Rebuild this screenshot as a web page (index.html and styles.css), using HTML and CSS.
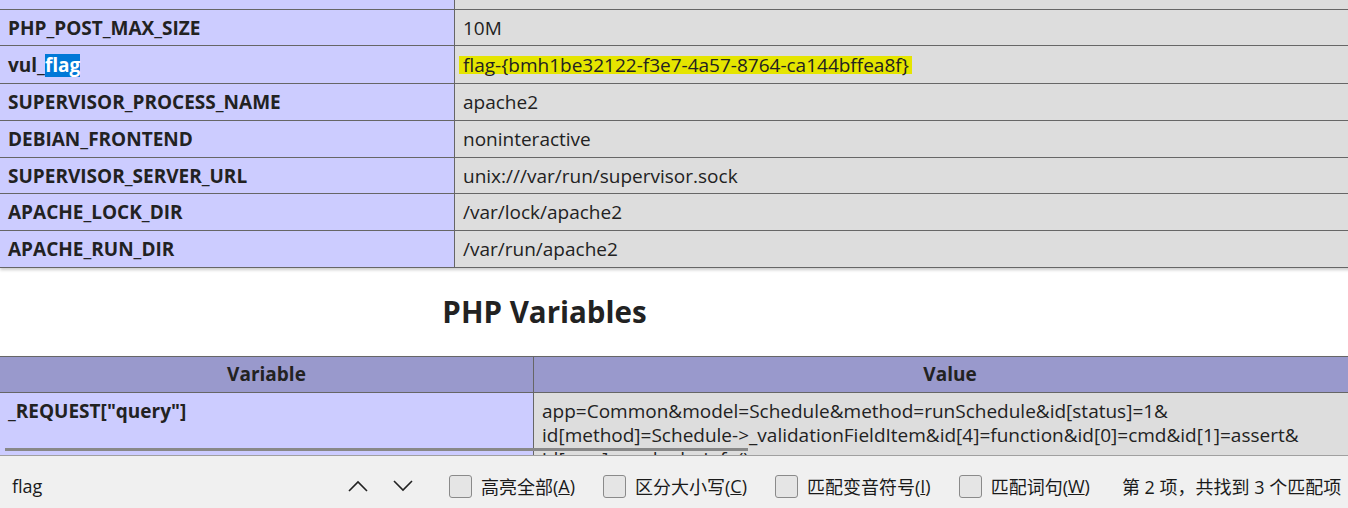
FILE: index.html
```html
<!DOCTYPE html>
<html lang="zh-CN">
<head>
  <meta charset="UTF-8">
  <title>phpinfo()</title>
  <link rel="stylesheet" href="styles.css">
</head>
<body>
  <div class="page">
    <table class="info env">
      <tr><td class="e">&nbsp;</td><td class="v">&nbsp;</td></tr>
      <tr><td class="e">PHP_POST_MAX_SIZE</td><td class="v">10M</td></tr>
      <tr><td class="e">vul_<span class="sel">flag</span></td><td class="v"><span class="hit">flag-{bmh1be32122-f3e7-4a57-8764-ca144bffea8f}</span></td></tr>
      <tr><td class="e">SUPERVISOR_PROCESS_NAME</td><td class="v">apache2</td></tr>
      <tr><td class="e">DEBIAN_FRONTEND</td><td class="v">noninteractive</td></tr>
      <tr><td class="e">SUPERVISOR_SERVER_URL</td><td class="v">unix:///var/run/supervisor.sock</td></tr>
      <tr><td class="e">APACHE_LOCK_DIR</td><td class="v">/var/lock/apache2</td></tr>
      <tr><td class="e">APACHE_RUN_DIR</td><td class="v">/var/run/apache2</td></tr>
    </table>

    <h2>PHP Variables</h2>

    <table class="info vars">
      <tr class="h"><th>Variable</th><th>Value</th></tr>
      <tr>
        <td class="e">_REQUEST["query"]</td>
        <td class="v multi">app=Common&amp;model=Schedule&amp;method=runSchedule&amp;id[status]=1&amp;<br>id[method]=Schedule-&gt;_validationFieldItem&amp;id[4]=function&amp;id[0]=cmd&amp;id[1]=assert&amp;<br>id[args]=cmd=phpinfo()</td>
      </tr>
    </table>

    <div class="hscroll"></div>
  </div>

  <div class="findbar">
    <div class="query">flag</div>
    <button class="nav" aria-label="上一个">
      <svg width="20" height="12" viewBox="0 0 20 12"><path d="M1 11 L10 2 L19 11" fill="none" stroke="#222" stroke-width="1.6"/></svg>
    </button>
    <button class="nav" aria-label="下一个">
      <svg width="20" height="12" viewBox="0 0 20 12"><path d="M1 1 L10 10 L19 1" fill="none" stroke="#222" stroke-width="1.6"/></svg>
    </button>
    <label class="opt"><span class="box"></span>高亮全部(<u>A</u>)</label>
    <label class="opt"><span class="box"></span>区分大小写(<u>C</u>)</label>
    <label class="opt"><span class="box"></span>匹配变音符号(<u>I</u>)</label>
    <label class="opt"><span class="box"></span>匹配词句(<u>W</u>)</label>
    <div class="status">第 2 项，共找到 3 个匹配项</div>
  </div>
</body>
</html>
```

FILE: styles.css
```css
html, body {
  margin: 0;
  height: 508px;
  overflow: hidden;
}
body {
  display: flex;
  flex-direction: column;
  background: #fff;
  color: #222;
  font-family: "Open Sans", "Noto Sans CJK SC", sans-serif;
}
.page {
  position: relative;
  height: 455px;
  flex: none;
  overflow: hidden;
}
.info {
  border-collapse: collapse;
  table-layout: fixed;
  margin-left: -1px;
  box-shadow: 1px 2px 3px #ccc;
}
.info td, .info th {
  border: 1px solid #666;
  font-size: 19px;
  line-height: 21.67px;
  padding: 8px 8px 6px;
  white-space: nowrap;
  overflow: hidden;
  text-align: left;
}
.env {
  width: 1420px;
  margin-top: -28px;
}
.env td.e {
  width: 438px;
}
.e {
  background: #ccccff;
  font-weight: bold;
}
.v {
  background: #dddddd;
}
.sel {
  display: inline-block;
  background: #0078d7;
  color: #fff;
  line-height: 23px;
}
.hit {
  display: inline-block;
  background: #e5e500;
  line-height: 18px;
  margin-left: -4px;
  padding: 0 3px 0 4px;
}
h2 {
  width: 1089px;
  margin: 27px 0;
  text-align: center;
  font-size: 29.5px;
  line-height: 34px;
}
.vars {
  width: 1368px;
}
.vars th {
  background: #9999cc;
  text-align: center;
  font-weight: bold;
  padding: 7px 8px;
}
.vars th:first-child {
  width: 517px;
}
.vars td {
  vertical-align: top;
}
.vars td.multi {
  line-height: 24px;
  padding-top: 6px;
}
.hscroll {
  position: absolute;
  left: 5px;
  bottom: 4px;
  width: 743px;
  height: 3px;
  background: #888;
}
.findbar {
  flex: 1;
  display: flex;
  align-items: center;
  padding-top: 8px;
  background: #f0f0f0;
  border-top: 1px solid #a0a0a0;
  font-size: 18px;
  color: #1a1a1a;
}
.query {
  width: 336px;
  padding-left: 12px;
}
.nav {
  border: 0;
  background: none;
  padding: 0;
  margin-right: 25px;
  display: flex;
}
.nav + .nav {
  margin-right: 36px;
}
.opt {
  display: flex;
  align-items: center;
  margin-right: 28px;
}
.box {
  width: 21px;
  height: 21px;
  border: 1px solid #8a8a8a;
  border-radius: 3px;
  background: #e5e5e5;
  margin-right: 9px;
}
.opt:last-of-type {
  margin-right: 32px;
}
.status {
  white-space: nowrap;
}
```
